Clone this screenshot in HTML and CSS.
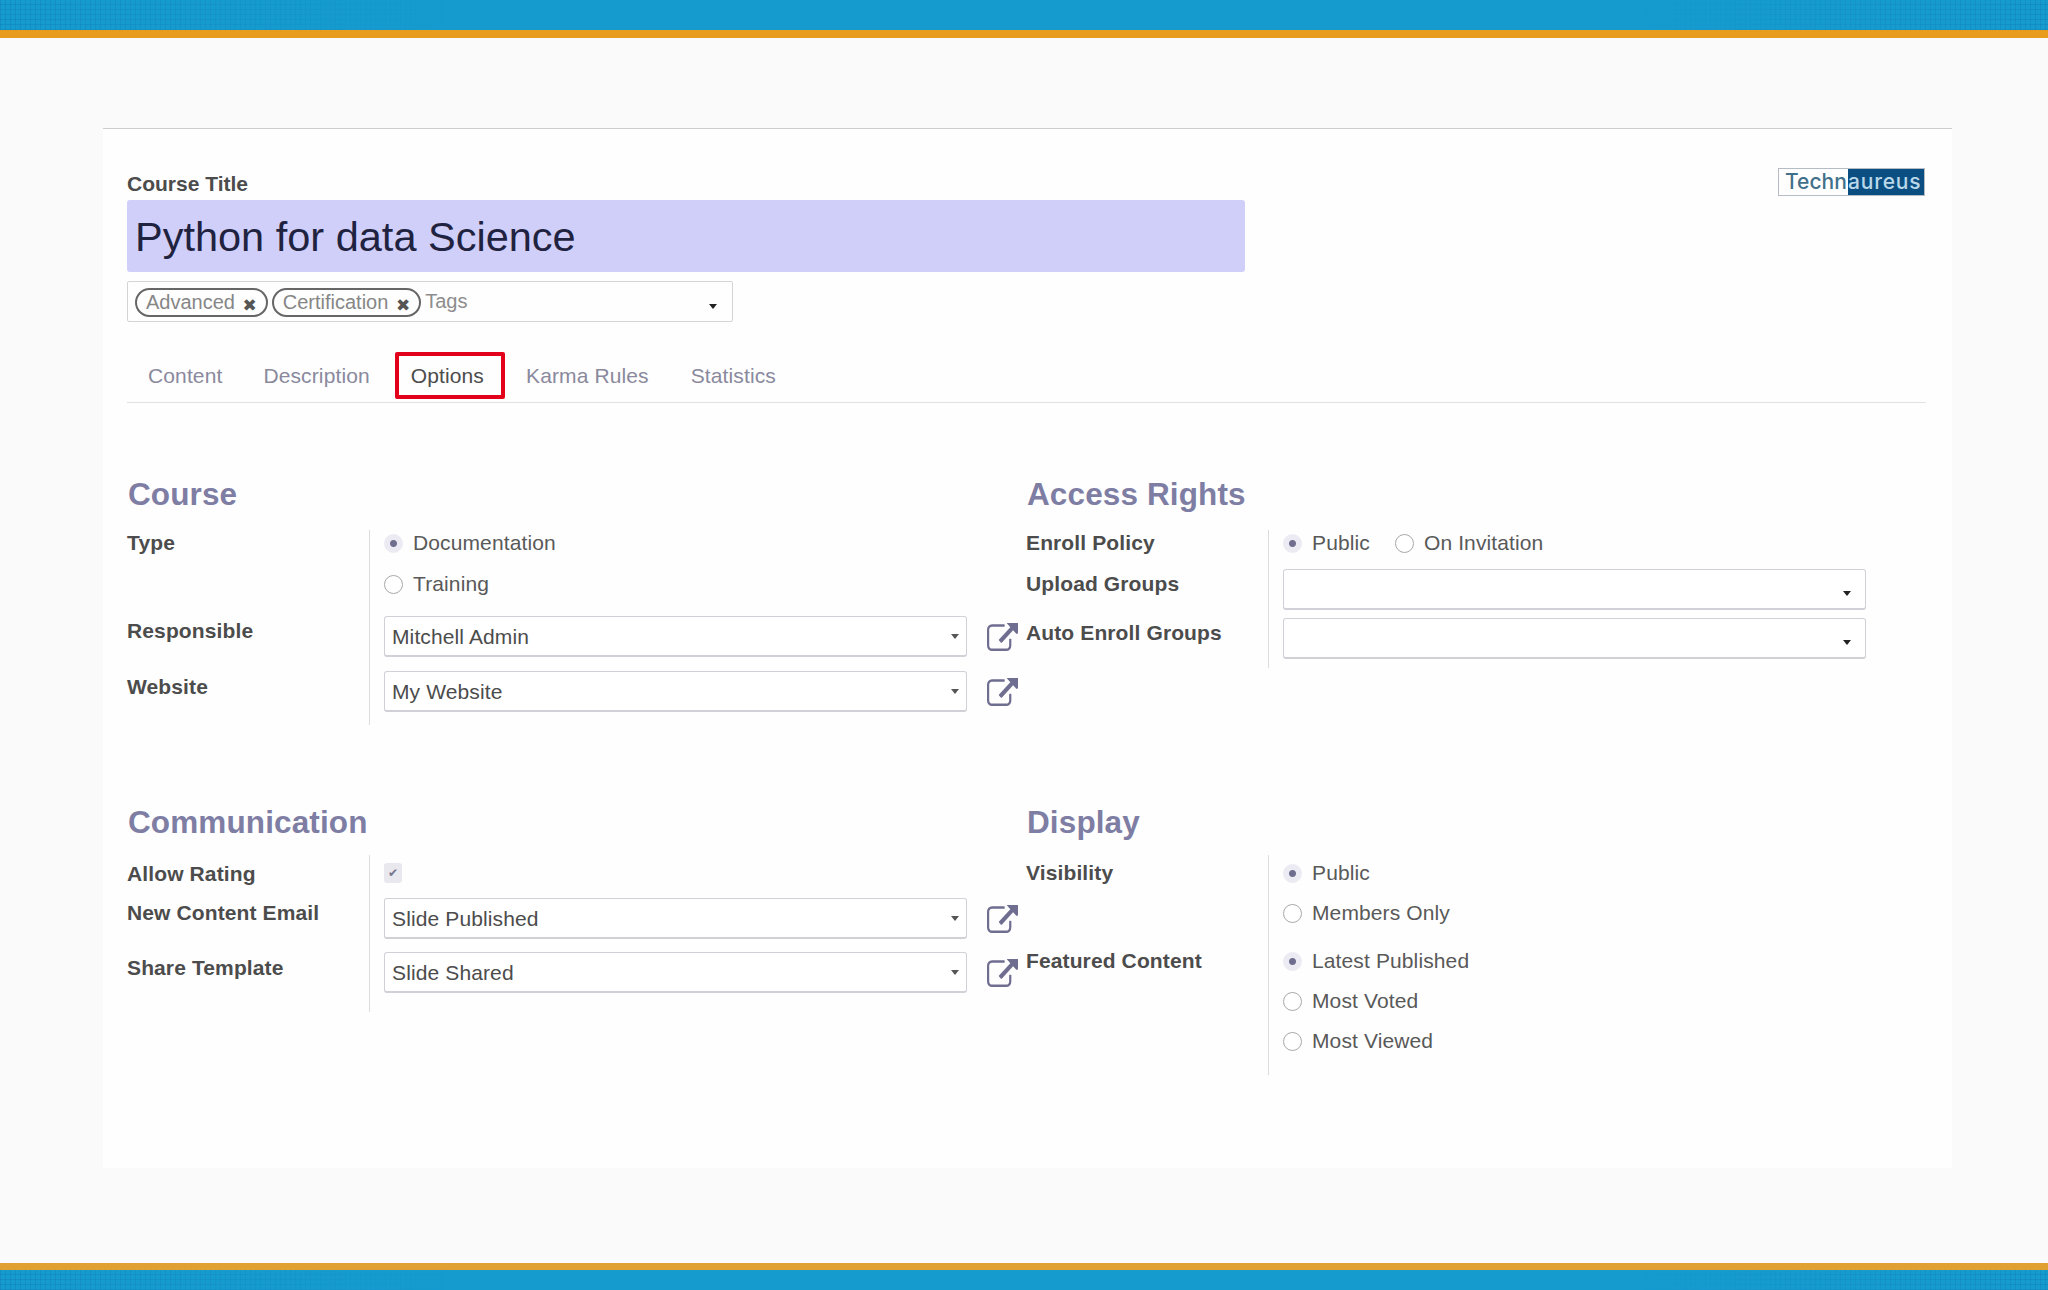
FILE: index.html
```html
<!DOCTYPE html>
<html lang="en">
<head>
    <meta charset="UTF-8">
    <title>Python for data Science</title>
    <link rel="stylesheet" href="styles.css">
</head>
<body>
    <svg class="icon-defs" width="0" height="0">
        <symbol id="external" viewBox="0 64 1792 1472" preserveAspectRatio="none">
            <path d="M1408 928v320q0 119-84.500 203.500t-203.500 84.500h-832q-119 0-203.500-84.500t-84.500-203.500v-832q0-119 84.500-203.500t203.500-84.500h704q14 0 23 9t9 23v64q0 14-9 23t-23 9h-704q-66 0-113 47t-47 113v832q0 66 47 113t113 47h832q66 0 113-47t47-113v-320q0-14 9-23t23-9h64q14 0 23 9t9 23zm384-864v512q0 26-19 45t-45 19-45-19l-176-176-652 652q-10 10-23 10t-23-10l-114-114q-10-10-10-23t10-23l652-652-176-176q-19-19-19-45t19-45 45-19h512q26 0 45 19t19 45z"/>
        </symbol>
    </svg>

    <div class="top-bar"></div>

    <main class="page">
        <div class="sheet">
            <div class="title-row">
                <div class="title-block">
                    <label class="title-label">Course Title</label>
                    <div class="title-input">Python for data Science</div>
                    <div class="tags-input">
                        <span class="tag">Advanced <span class="tag-x">✖</span></span>
                        <span class="tag">Certification <span class="tag-x">✖</span></span>
                        <span class="tags-placeholder">Tags</span>
                        <span class="caret caret-low"></span>
                    </div>
                </div>
                <div class="logo"><span class="logo-left">Techn</span><span class="logo-right">aureus</span></div>
            </div>

            <nav class="tabs">
                <a class="tab">Content</a>
                <a class="tab">Description</a>
                <a class="tab tab-active">Options</a>
                <a class="tab">Karma Rules</a>
                <a class="tab">Statistics</a>
            </nav>

            <div class="groups">
                <section>
                    <h2>Course</h2>
                    <div class="fields fields-course">
                        <div class="field">
                            <div class="field-label field-label-radio">Type</div>
                            <div class="field-value field-value-stack pad-type">
                                <label class="radio-line"><input type="radio" name="type" checked>Documentation</label>
                                <label class="radio-line"><input type="radio" name="type">Training</label>
                            </div>
                        </div>
                        <div class="field">
                            <div class="field-label">Responsible</div>
                            <div class="field-value pad-select-first">
                                <div class="select">Mitchell Admin<span class="caret"></span></div>
                                <svg class="ext-link"><use href="#external"/></svg>
                            </div>
                        </div>
                        <div class="field">
                            <div class="field-label label-low">Website</div>
                            <div class="field-value">
                                <div class="select">My Website<span class="caret"></span></div>
                                <svg class="ext-link"><use href="#external"/></svg>
                            </div>
                        </div>
                    </div>
                </section>

                <section>
                    <h2>Access Rights</h2>
                    <div class="fields fields-access">
                        <div class="field">
                            <div class="field-label field-label-radio">Enroll Policy</div>
                            <div class="field-value field-value-inline">
                                <label class="radio-line"><input type="radio" name="enroll" checked>Public</label>
                                <label class="radio-line"><input type="radio" name="enroll">On Invitation</label>
                            </div>
                        </div>
                        <div class="field">
                            <div class="field-label">Upload Groups</div>
                            <div class="field-value pad-tight">
                                <div class="select"><span class="caret caret-low"></span></div>
                            </div>
                        </div>
                        <div class="field">
                            <div class="field-label">Auto Enroll Groups</div>
                            <div class="field-value">
                                <div class="select"><span class="caret caret-low"></span></div>
                            </div>
                        </div>
                    </div>
                </section>

                <section>
                    <h2 class="h2-close">Communication</h2>
                    <div class="fields fields-comm">
                        <div class="field">
                            <div class="field-label label-check">Allow Rating</div>
                            <div class="field-value pad-check">
                                <span class="check">✔</span>
                            </div>
                        </div>
                        <div class="field">
                            <div class="field-label">New Content Email</div>
                            <div class="field-value pad-short">
                                <div class="select">Slide Published<span class="caret"></span></div>
                                <svg class="ext-link"><use href="#external"/></svg>
                            </div>
                        </div>
                        <div class="field">
                            <div class="field-label label-low">Share Template</div>
                            <div class="field-value">
                                <div class="select">Slide Shared<span class="caret"></span></div>
                                <svg class="ext-link"><use href="#external"/></svg>
                            </div>
                        </div>
                    </div>
                </section>

                <section>
                    <h2 class="h2-close">Display</h2>
                    <div class="fields fields-display">
                        <div class="field">
                            <div class="field-label field-label-radio label-visibility">Visibility</div>
                            <div class="field-value field-value-stack pad-visibility">
                                <label class="radio-line"><input type="radio" name="visibility" checked>Public</label>
                                <label class="radio-line"><input type="radio" name="visibility">Members Only</label>
                            </div>
                        </div>
                        <div class="field">
                            <div class="field-label field-label-radio label-featured">Featured Content</div>
                            <div class="field-value field-value-stack pad-featured">
                                <label class="radio-line"><input type="radio" name="featured" checked>Latest Published</label>
                                <label class="radio-line"><input type="radio" name="featured">Most Voted</label>
                                <label class="radio-line"><input type="radio" name="featured">Most Viewed</label>
                            </div>
                        </div>
                    </div>
                </section>
            </div>
        </div>
    </main>

    <div class="bottom-bar"></div>
</body>
</html>
```

FILE: styles.css
```css
* {
    box-sizing: border-box;
}
body {
    font-family: "Liberation Sans", Arial, sans-serif;
    font-size: 21px;
    line-height: 26px;
    letter-spacing: 0.12px;
    color: #4c4c4c;
    background-color: #fafafb;
    margin: 0;
    height: 100vh;
    display: flex;
    flex-direction: column;
    overflow: hidden;
}
.icon-defs {
    position: absolute;
}

/* blue bars, top and bottom */
.top-bar, .bottom-bar {
    position: relative;
    background-color: #169bcf;
    flex: none;
}
.top-bar {
    height: 38px;
    border-bottom: 8px solid #e89c1e;
}
.bottom-bar {
    height: 27px;
    border-top: 7px solid #e0a032;
}
.top-bar::before, .bottom-bar::before {
    content: '';
    position: absolute;
    inset: 0;
    background-image:
        repeating-linear-gradient(90deg, rgba(10, 80, 150, 0.16) 0 1px, transparent 1px 5px),
        repeating-linear-gradient(0deg, rgba(10, 80, 150, 0.16) 0 1px, transparent 1px 5px);
    -webkit-mask-image: linear-gradient(90deg, #000 0, transparent 22%, transparent 80%, #000 100%);
    mask-image: linear-gradient(90deg, #000 0, transparent 22%, transparent 80%, #000 100%);
}

.page {
    flex: 1;
    display: flex;
    padding: 90px 96px 95px 103px;
}
.sheet {
    flex: 1;
    background-color: #fefefe;
    border-top: 1px solid #ccc;
    padding: 39px 26px 0 24px;
}

/* title + logo */
.title-row {
    display: flex;
    justify-content: space-between;
    align-items: flex-start;
}
.title-block {
    width: 1118px;
    padding-top: 4px;
}
.title-label {
    display: block;
    font-weight: bold;
    line-height: 24px;
    height: 28px;
    letter-spacing: 0;
}
.title-input {
    height: 72px;
    line-height: 74px;
    padding-left: 8px;
    font-size: 41.5px;
    letter-spacing: 0;
    color: #1f2340;
    background-color: #d0cffa;
    border-radius: 3px;
}
.tags-input {
    position: relative;
    width: 606px;
    height: 41px;
    margin-top: 9px;
    padding: 6px 7px 0;
    display: flex;
    align-items: flex-start;
    gap: 4px;
    font-size: 20px;
    letter-spacing: 0;
    border: 1px solid #d4d4d4;
    border-radius: 2px;
}
.tag {
    height: 29px;
    line-height: 24px;
    padding: 0 9px 0 9px;
    color: #868686;
    border: 2px solid #666;
    border-radius: 15px;
    white-space: nowrap;
}
.tag-x {
    font-family: "DejaVu Sans", sans-serif;
    font-size: 17px;
    color: #555;
    margin-left: 2px;
    position: relative;
    top: 2px;
}
.tags-placeholder {
    color: #8d8d8d;
    line-height: 27px;
}
.logo {
    display: flex;
    height: 28px;
    margin-right: 1px;
    font-family: "Inter", sans-serif;
    font-size: 21px;
    font-weight: 500;
    line-height: 26px;
    letter-spacing: 0;
    border: 1px solid #b5bcc4;
}
.logo-left {
    width: 69px;
    padding-left: 6px;
    color: #41708a;
    overflow: hidden;
}
.logo-right {
    width: 76px;
    letter-spacing: 0.8px;
    color: #b9d8ea;
    background-color: #0b4f82;
}

/* tabs */
.tabs {
    display: flex;
    height: 51px;
    margin-top: 30px;
    border-bottom: 1px solid #e2e2e2;
}
.tab {
    padding: 11px 21px 0;
    color: #8a899d;
}
.tab:first-child {
    padding-right: 20px;
}
.tab-active {
    height: 47px;
    padding: 7px 17px 0 12px;
    margin-left: 4px;
    color: #4c4c4c;
    border: 4px solid #e3001b;
    border-radius: 2px;
}

/* option groups */
.groups {
    display: grid;
    grid-template-columns: 899px 1fr;
    row-gap: 79px;
    margin-top: 73px;
}
h2 {
    font-size: 31.5px;
    line-height: 36px;
    color: #7e7da3;
    margin: 0 0 18px 1px;
}
.h2-close {
    margin-bottom: 15px;
}
.fields {
    display: flex;
    flex-direction: column;
}
.fields-course { height: 195px; }
.fields-access { height: 138px; }
.fields-comm { height: 157px; }
.fields-display { height: 220px; }

.field {
    display: flex;
}
.field:last-child {
    flex: 1;
}
.field-label {
    width: 242px;
    flex: none;
    padding-top: 10px;
    font-weight: bold;
}
.field-label-radio {
    padding-top: 0;
}
.label-check {
    padding-top: 6px;
}
.label-low {
    padding-top: 11px;
}
.label-visibility {
    padding-top: 5px;
}
.label-featured {
    padding-top: 17px;
}
.field-value {
    flex: 1;
    display: flex;
    align-items: flex-start;
    padding: 8px 0 8px 14px;
    border-left: 1px solid #dcdcdc;
}
.field-value-stack {
    flex-direction: column;
    gap: 14px;
    padding-top: 0;
    padding-bottom: 0;
}
.field-value-inline {
    gap: 25px;
    padding-top: 0;
    padding-bottom: 5px;
}
.pad-type { gap: 15px; padding-bottom: 11px; }
.pad-select-first { padding-bottom: 6px; }
.pad-tight { padding-bottom: 0; }
.pad-check { padding-bottom: 7px; }
.pad-short { padding-bottom: 5px; }
.pad-visibility { padding-top: 5px; padding-bottom: 5px; }
.pad-featured { padding-top: 17px; }

.radio-line {
    display: flex;
    align-items: center;
    gap: 10px;
    height: 26px;
    color: #595959;
}
.radio-line input {
    appearance: none;
    width: 19px;
    height: 19px;
    margin: 0;
    border: 1px solid #a8a8a8;
    border-radius: 50%;
    background-color: #fff;
}
.radio-line input:checked {
    border-color: #ecebf3;
    background: radial-gradient(circle, #6f6e8e 0 3px, #ecebf3 4px);
}
.check {
    display: block;
    width: 18px;
    height: 20px;
    font-family: "DejaVu Sans", sans-serif;
    font-size: 12px;
    line-height: 20px;
    text-align: center;
    color: #77768f;
    background-color: #e9e8ef;
    border-radius: 3px;
}
.select {
    position: relative;
    width: 583px;
    height: 41px;
    line-height: 39px;
    padding-left: 7px;
    background-color: #fff;
    border: 1px solid #d0d0d6;
    border-bottom-width: 2px;
    border-radius: 3px;
}
.caret {
    position: absolute;
    right: 7px;
    top: 17px;
    border-top: 5px solid #555;
    border-left: 4px solid transparent;
    border-right: 4px solid transparent;
}
.caret-low {
    right: 14px;
    top: 21px;
    border-top-color: #222;
}
.tags-input .caret-low {
    top: 22px;
    right: 15px;
}
.ext-link {
    width: 31px;
    height: 28px;
    margin: 7px 0 0 20px;
    flex: none;
    fill: #6f6e90;
}
```
